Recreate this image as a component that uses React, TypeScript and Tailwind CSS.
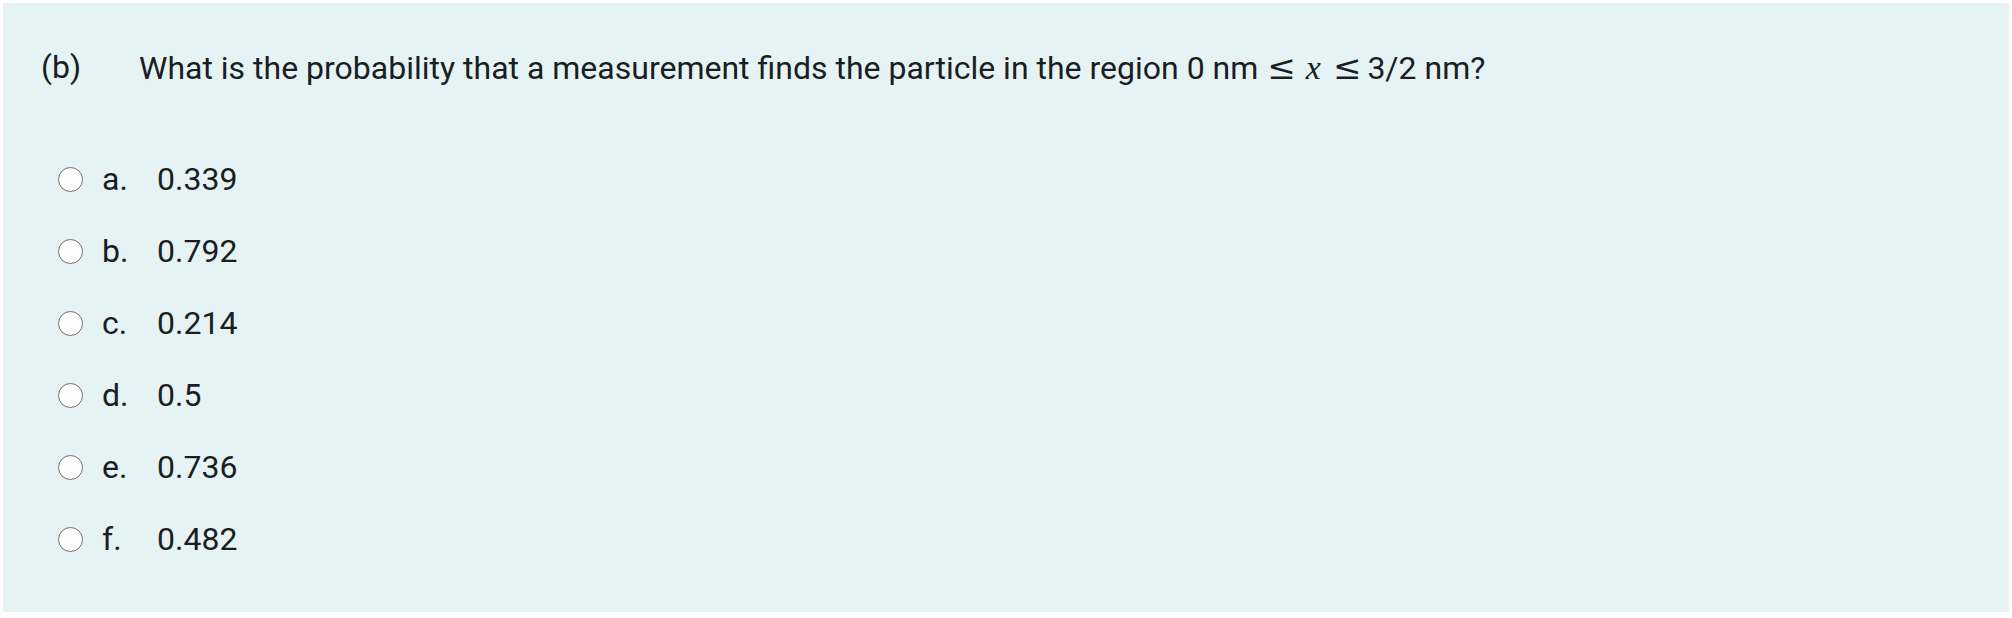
import React from "react";

const options = [
  { l: "a.", v: "0.339" },
  { l: "b.", v: "0.792" },
  { l: "c.", v: "0.214" },
  { l: "d.", v: "0.5" },
  { l: "e.", v: "0.736" },
  { l: "f.", v: "0.482" },
];

export default function App() {
  return (
    <div className="w-[2012px] h-[618px] bg-white pt-[3px] pl-[3px]" style={{ fontFamily: "Roboto, 'Liberation Sans', sans-serif" }}>
      <div className="w-[2006px] h-[609px] bg-[#e5f3f4] pt-[42px] pl-[38px] text-[#1a1e22] text-[32px] leading-[45px]">
        <div className="flex">
          <div className="w-[98px] shrink-0">(b)</div>
          <div className="flex items-baseline whitespace-pre">
            <span>What is the probability that a measurement finds the particle in the region 0 nm</span>
            <span className="ml-[9px] text-[34px]" style={{ fontFamily: "'DejaVu Serif', serif" }}>≤</span>
            <span className="ml-[10px] italic text-[34px]" style={{ fontFamily: "'Liberation Serif', serif" }}>x</span>
            <span className="ml-[12px] text-[34px]" style={{ fontFamily: "'DejaVu Serif', serif" }}>≤</span>
            <span className="ml-[6px]">3/2 nm?</span>
          </div>
        </div>
        <div className="mt-[52px] ml-[17px] flex flex-col">
          {options.map((o) => (
            <div key={o.l} className="flex items-center h-[72px]">
              <span className="w-[25px] h-[25px] rounded-full border-[1.5px] border-[#707070] bg-white shrink-0" />
              <span className="ml-[19px] w-[55px] shrink-0">{o.l}</span>
              <span>{o.v}</span>
            </div>
          ))}
        </div>
      </div>
    </div>
  );
}
